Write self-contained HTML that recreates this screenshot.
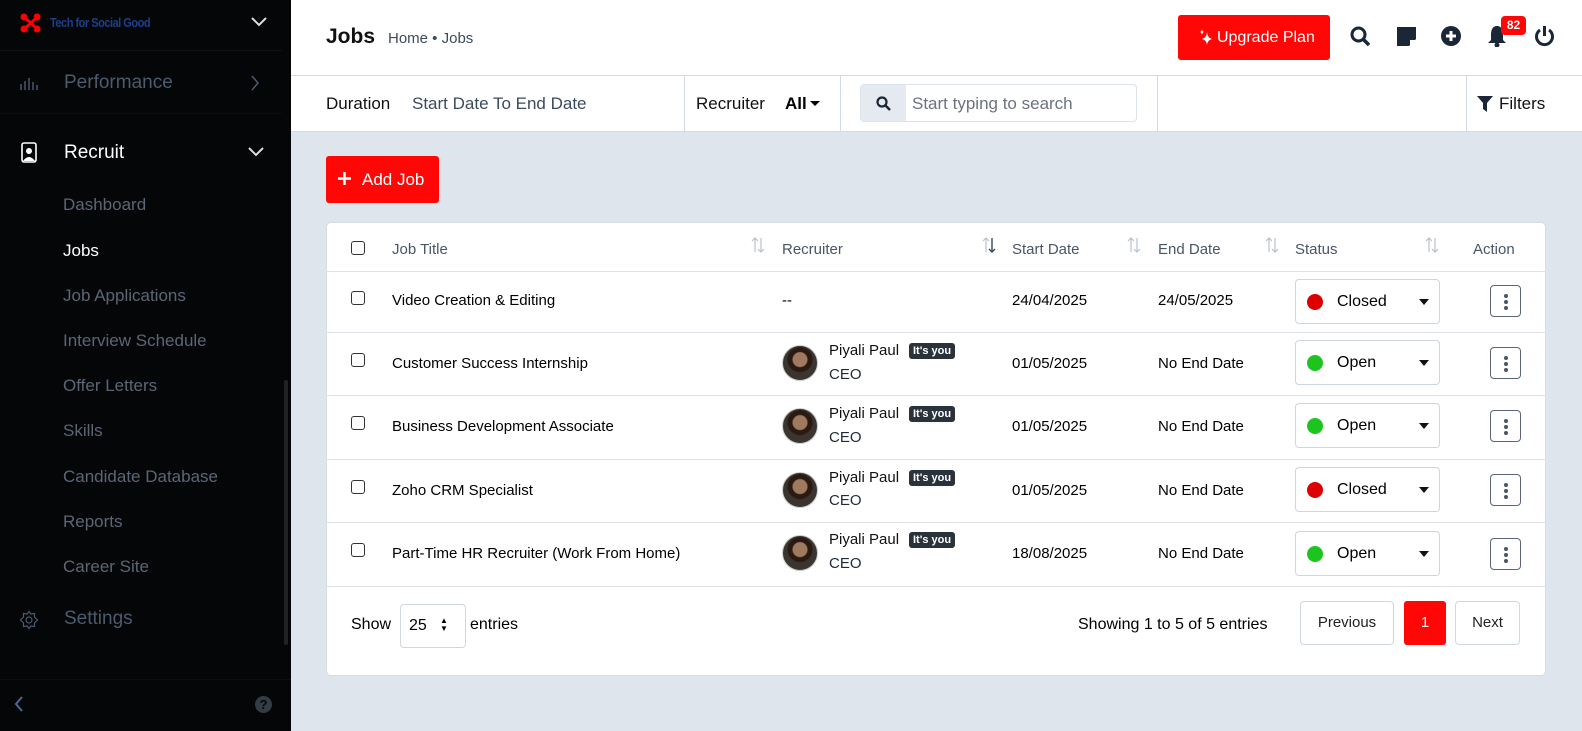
<!DOCTYPE html>
<html><head><style>
*{box-sizing:border-box;margin:0;padding:0}
body{width:1582px;height:731px;overflow:hidden;font-family:"Liberation Sans",Arial,sans-serif;background:#dee5ed;position:relative;color:#000}
.a{position:absolute}
#sb{left:0;top:0;width:291px;height:731px;background:#050608}
.sub{position:absolute;left:63px;font-size:17px;color:#5b6675}
.hd{font-size:15px;color:#4a5568;position:absolute;top:241px}
.sort{position:absolute;top:237px}
.cb{position:absolute;width:14px;height:14px;border:1.5px solid #333;border-radius:3px;left:351px}
.row{position:absolute;left:326px;width:1220px;border-top:1px solid #dde2e8}
.t{position:absolute;font-size:15px}
.st{position:absolute;left:1295px;width:145px;height:45px;border:1px solid #cdd6e0;border-radius:4px;background:#fff}
.st i{position:absolute;left:11px;top:14px;width:16px;height:16px;border-radius:50%}
.st span{position:absolute;left:41px;top:13px;font-size:16px}
.st b{position:absolute;right:10px;top:19px;border-left:5px solid transparent;border-right:5px solid transparent;border-top:6px solid #111}
.act{position:absolute;left:1490px;width:31px;height:32px;border:1px solid #5a6677;border-radius:4px;background:#fff}
.act i{position:absolute;left:13px;width:4px;height:4px;border-radius:50%;background:#4a5568}
.av{position:absolute;left:782px;width:36px;height:36px;border-radius:50%;background:radial-gradient(circle at 50% 40%,#a07a60 0 7px,#2a1a12 8px 12px,#3a3530 13px);border:1px solid #ccc}
.nm{position:absolute;left:829px;font-size:15px;color:#111}
.yu{position:absolute;left:909px;background:#2a323c;color:#fff;font-size:11px;font-weight:bold;padding:2px 4px;border-radius:3px}
.ceo{position:absolute;left:829px;font-size:15px;color:#1e2a3a}
</style></head><body>
<div id="sb" class="a">
 <svg class="a" style="left:20px;top:13px" width="22" height="20" viewBox="0 0 22 20"><circle cx="4" cy="4" r="3.5" fill="#f00"/><circle cx="17" cy="4" r="3.5" fill="#f00"/><circle cx="4" cy="16" r="3.5" fill="#f00"/><circle cx="17" cy="16" r="3.5" fill="#f00"/><path d="M4 4L11 10L17 4M4 16L11 10L17 16" stroke="#f00" stroke-width="3"/></svg>
 <div class="a" style="left:50px;top:15px;font-size:13px;font-weight:bold;color:#1c3f8a;letter-spacing:-.6px;transform:scaleX(.85);transform-origin:left">Tech for Social Good</div>
 <svg class="a" style="left:251px;top:17px" width="16" height="10"><path d="M1 1L8 8L15 1" stroke="#ddd" stroke-width="2" fill="none"/></svg>
 <div class="a" style="left:0;top:50px;width:282px;height:1px;background:#111"></div>
 <svg class="a" style="left:20px;top:76px" width="18" height="14"><path d="M1 14V8M5 14V5M9 14V2M13 14V6M17 14V9" stroke="#4a5668" stroke-width="1.5"/></svg>
 <div class="a" style="left:64px;top:72px;font-size:19px;color:#4c5b6d">Performance</div>
 <svg class="a" style="left:250px;top:75px" width="10" height="16"><path d="M2 1L8 8L2 15" stroke="#4c5b6d" stroke-width="1.5" fill="none"/></svg>
 <div class="a" style="left:0;top:113px;width:282px;height:1px;background:#0d0d0f"></div>
 <svg class="a" style="left:21px;top:142px" width="16" height="21"><rect x="1" y="1" width="14" height="19" rx="2" fill="none" stroke="#fff" stroke-width="1.6"/><circle cx="8" cy="9" r="3" fill="#fff"/><path d="M2 19Q8 11 14 19Z" fill="#fff"/></svg>
 <div class="a" style="left:64px;top:142px;font-size:19px;color:#fff">Recruit</div>
 <svg class="a" style="left:248px;top:147px" width="16" height="10"><path d="M1 1L8 8L15 1" stroke="#ddd" stroke-width="2" fill="none"/></svg>
 <div class="sub" style="top:195px">Dashboard</div>
 <div class="sub" style="top:241px;color:#fff">Jobs</div>
 <div class="sub" style="top:286px">Job Applications</div>
 <div class="sub" style="top:331px">Interview Schedule</div>
 <div class="sub" style="top:376px">Offer Letters</div>
 <div class="sub" style="top:421px">Skills</div>
 <div class="sub" style="top:467px">Candidate Database</div>
 <div class="sub" style="top:512px">Reports</div>
 <div class="sub" style="top:557px">Career Site</div>
 <div class="a" style="left:284px;top:380px;width:4px;height:265px;background:#222;border-radius:2px"></div>
 <svg class="a" style="left:19px;top:610px" width="20" height="20" viewBox="0 0 20 20"><circle cx="10" cy="10" r="3" fill="none" stroke="#4c5b6d" stroke-width="1.2"/><path d="M10 1.5L12 4L15.5 3.5L15.5 7L18.5 10L15.5 13L15.5 16.5L12 16L10 18.5L8 16L4.5 16.5L4.5 13L1.5 10L4.5 7L4.5 3.5L8 4Z" fill="none" stroke="#4c5b6d" stroke-width="1.2"/></svg>
 <div class="a" style="left:64px;top:608px;font-size:19px;color:#4c5b6d">Settings</div>
 <div class="a" style="left:0;top:679px;width:291px;height:1px;background:#0d0d0f"></div>
 <svg class="a" style="left:14px;top:696px" width="10" height="16"><path d="M8 1L2 8L8 15" stroke="#4c6a90" stroke-width="2" fill="none"/></svg>
 <div class="a" style="left:255px;top:696px;width:17px;height:17px;border-radius:50%;background:#333b46;color:#050608;font-size:13px;font-weight:bold;text-align:center;line-height:17px">?</div>
</div>
<!-- header -->
<div class="a" style="left:291px;top:0;width:1291px;height:76px;background:#fff;border-bottom:1px solid #cfdbe6"></div>
<div class="a" style="left:326px;top:25px;font-size:21px;font-weight:bold;color:#111">Jobs</div>
<div class="a" style="left:388px;top:30px;font-size:15px;color:#3d4a5c">Home • Jobs</div>
<div class="a" style="left:1178px;top:15px;width:152px;height:45px;background:#ff0707;border-radius:3px;color:#fff;font-size:16px;line-height:45px;padding-left:39px">Upgrade Plan</div>
<svg class="a" style="left:1199px;top:29px" width="14" height="16"><path d="M8 3Q8.5 9 13 10Q8.5 11 8 16Q7.5 11 3 10Q7.5 9 8 3Z" fill="#fff"/><path d="M3 0Q3.3 2.5 5 3Q3.3 3.5 3 6Q2.7 3.5 1 3Q2.7 2.5 3 0Z" fill="#fff"/></svg>
<svg class="a" style="left:1350px;top:26px" width="21" height="21"><circle cx="8.5" cy="8.5" r="6.5" fill="none" stroke="#1b2737" stroke-width="3"/><path d="M13 13L19 19" stroke="#1b2737" stroke-width="3.5"/></svg>
<svg class="a" style="left:1397px;top:27px" width="19" height="19"><path d="M0 0H19V12L12 19H0Z" fill="#1b2737"/><path d="M13 13H19L13 19Z" fill="#fff"/></svg>
<svg class="a" style="left:1441px;top:26px" width="20" height="20"><circle cx="10" cy="10" r="10" fill="#1b2737"/><path d="M10 5V15M5 10H15" stroke="#fff" stroke-width="3"/></svg>
<svg class="a" style="left:1487px;top:25px" width="20" height="22"><path d="M10 1C5 1 4 6 4 10V15L1 18H19L16 15V10C16 6 15 1 10 1Z" fill="#1b2737"/><circle cx="10" cy="20" r="2.5" fill="#1b2737"/></svg>
<div class="a" style="left:1501px;top:16px;width:25px;height:19px;background:#ff0707;color:#fff;border-radius:4px;font-size:12px;font-weight:bold;text-align:center;line-height:19px">82</div>
<svg class="a" style="left:1534px;top:25px" width="21" height="22"><path d="M6 5A8 8 0 1 0 15 5" fill="none" stroke="#1b2737" stroke-width="3"/><path d="M10.5 1V11" stroke="#1b2737" stroke-width="3"/></svg>
<!-- filter bar -->
<div class="a" style="left:291px;top:76px;width:1291px;height:56px;background:#fff;border-bottom:1px solid #cfdbe6"></div>
<div class="a" style="left:326px;top:94px;font-size:17px;color:#111">Duration</div>
<div class="a" style="left:412px;top:94px;font-size:17px;color:#3d4a5c">Start Date To End Date</div>
<div class="a" style="left:684px;top:76px;width:1px;height:56px;background:#cfdbe6"></div>
<div class="a" style="left:696px;top:94px;font-size:17px;color:#111">Recruiter</div>
<div class="a" style="left:785px;top:94px;font-size:17px;font-weight:bold;color:#000">All</div>
<div class="a" style="left:810px;top:101px;border-left:5px solid transparent;border-right:5px solid transparent;border-top:5px solid #000"></div>
<div class="a" style="left:840px;top:76px;width:1px;height:56px;background:#cfdbe6"></div>
<div class="a" style="left:860px;top:84px;width:277px;height:38px;border:1px solid #dde3ea;border-radius:4px"></div>
<div class="a" style="left:861px;top:85px;width:45px;height:36px;background:#e5eaf0"></div>
<svg class="a" style="left:876px;top:96px" width="15" height="15"><circle cx="6" cy="6" r="4.5" fill="none" stroke="#1b2737" stroke-width="2.2"/><path d="M9 9L14 14" stroke="#1b2737" stroke-width="2.5"/></svg>
<div class="a" style="left:912px;top:94px;font-size:17px;color:#6b7380">Start typing to search</div>
<div class="a" style="left:1157px;top:76px;width:1px;height:56px;background:#cfdbe6"></div>
<div class="a" style="left:1466px;top:76px;width:1px;height:56px;background:#cfdbe6"></div>
<svg class="a" style="left:1477px;top:96px" width="16" height="16"><path d="M0 0H16L10 7V16L6 13V7Z" fill="#1b2737"/></svg>
<div class="a" style="left:1499px;top:94px;font-size:17px;color:#111">Filters</div>
<!-- add job -->
<div class="a" style="left:326px;top:156px;width:113px;height:47px;background:#ff0707;border-radius:3px;color:#fff;font-size:17px;line-height:47px;padding-left:36px">Add Job</div>
<svg class="a" style="left:337px;top:171px" width="15" height="15"><path d="M7.5 1V14M1 7.5H14" stroke="#fff" stroke-width="2.5"/></svg>
<!-- table -->
<div class="a" style="left:326px;top:222px;width:1220px;height:454px;background:#fff;border-radius:5px;border:1px solid #d5dde6"></div>
<div class="cb" style="top:241px"></div>
<div class="hd" style="left:392px">Job Title</div>
<div class="hd" style="left:782px">Recruiter</div>
<div class="hd" style="left:1012px">Start Date</div>
<div class="hd" style="left:1158px">End Date</div>
<div class="hd" style="left:1295px">Status</div>
<div class="hd" style="left:1473px">Action</div>
<svg class="sort" style="left:751px" width="14" height="16"><path d="M4 15V1M1 4L4 1L7 4M10 1V15M7 12L10 15L13 12" stroke="#b8c2cc" stroke-width="1.2" fill="none"/></svg>
<svg class="sort" style="left:982px" width="14" height="16"><path d="M4 15V1M1 4L4 1L7 4" stroke="#b8c2cc" stroke-width="1.2" fill="none"/><path d="M10 1V15M7 12L10 15L13 12" stroke="#3d4a5c" stroke-width="1.4" fill="none"/></svg>
<svg class="sort" style="left:1127px" width="14" height="16"><path d="M4 15V1M1 4L4 1L7 4M10 1V15M7 12L10 15L13 12" stroke="#b8c2cc" stroke-width="1.2" fill="none"/></svg>
<svg class="sort" style="left:1265px" width="14" height="16"><path d="M4 15V1M1 4L4 1L7 4M10 1V15M7 12L10 15L13 12" stroke="#b8c2cc" stroke-width="1.2" fill="none"/></svg>
<svg class="sort" style="left:1425px" width="14" height="16"><path d="M4 15V1M1 4L4 1L7 4M10 1V15M7 12L10 15L13 12" stroke="#b8c2cc" stroke-width="1.2" fill="none"/></svg>

<div class="row" style="top:271px"></div>
<div class="cb" style="top:291px"></div>
<div class="t" style="left:392px;top:292px">Video Creation &amp; Editing</div>
<div class="t" style="left:782px;top:292px">--</div>
<div class="t" style="left:1012px;top:292px">24/04/2025</div>
<div class="t" style="left:1158px;top:292px">24/05/2025</div>
<div class="st" style="top:279px"><i style="background:#d00"></i><span>Closed</span><b></b></div>
<div class="act" style="top:285px"><i style="top:8px"></i><i style="top:14px"></i><i style="top:20px"></i></div>

<div class="row" style="top:332px"></div>
<div class="cb" style="top:353px"></div>
<div class="t" style="left:392px;top:355px">Customer Success Internship</div>
<div class="av" style="top:345px"></div><div class="nm" style="top:342px">Piyali Paul</div><div class="yu" style="top:343px">It's you</div><div class="ceo" style="top:366px">CEO</div>
<div class="t" style="left:1012px;top:355px">01/05/2025</div>
<div class="t" style="left:1158px;top:355px">No End Date</div>
<div class="st" style="top:340px"><i style="background:#1ec41e"></i><span>Open</span><b></b></div>
<div class="act" style="top:347px"><i style="top:8px"></i><i style="top:14px"></i><i style="top:20px"></i></div>

<div class="row" style="top:395px"></div>
<div class="cb" style="top:416px"></div>
<div class="t" style="left:392px;top:418px">Business Development Associate</div>
<div class="av" style="top:408px"></div><div class="nm" style="top:405px">Piyali Paul</div><div class="yu" style="top:406px">It's you</div><div class="ceo" style="top:429px">CEO</div>
<div class="t" style="left:1012px;top:418px">01/05/2025</div>
<div class="t" style="left:1158px;top:418px">No End Date</div>
<div class="st" style="top:403px"><i style="background:#1ec41e"></i><span>Open</span><b></b></div>
<div class="act" style="top:410px"><i style="top:8px"></i><i style="top:14px"></i><i style="top:20px"></i></div>

<div class="row" style="top:459px"></div>
<div class="cb" style="top:480px"></div>
<div class="t" style="left:392px;top:482px">Zoho CRM Specialist</div>
<div class="av" style="top:472px"></div><div class="nm" style="top:469px">Piyali Paul</div><div class="yu" style="top:470px">It's you</div><div class="ceo" style="top:492px">CEO</div>
<div class="t" style="left:1012px;top:482px">01/05/2025</div>
<div class="t" style="left:1158px;top:482px">No End Date</div>
<div class="st" style="top:467px"><i style="background:#d00"></i><span>Closed</span><b></b></div>
<div class="act" style="top:474px"><i style="top:8px"></i><i style="top:14px"></i><i style="top:20px"></i></div>

<div class="row" style="top:522px"></div>
<div class="cb" style="top:543px"></div>
<div class="t" style="left:392px;top:545px">Part-Time HR Recruiter (Work From Home)</div>
<div class="av" style="top:535px"></div><div class="nm" style="top:531px">Piyali Paul</div><div class="yu" style="top:532px">It's you</div><div class="ceo" style="top:555px">CEO</div>
<div class="t" style="left:1012px;top:545px">18/08/2025</div>
<div class="t" style="left:1158px;top:545px">No End Date</div>
<div class="st" style="top:531px"><i style="background:#1ec41e"></i><span>Open</span><b></b></div>
<div class="act" style="top:538px"><i style="top:8px"></i><i style="top:14px"></i><i style="top:20px"></i></div>

<div class="row" style="top:586px"></div>
<div class="t" style="left:351px;top:616px;font-size:16px">Show</div>
<div class="a" style="left:400px;top:604px;width:66px;height:44px;border:1px solid #cfd7e0;border-radius:4px;background:#fff"></div>
<div class="t" style="left:409px;top:617px;font-size:16px">25</div>
<div class="a" style="left:440px;top:617px;font-size:8px;line-height:8px">▲<br>▼</div>
<div class="t" style="left:470px;top:616px;font-size:16px">entries</div>
<div class="t" style="left:1078px;top:616px;font-size:16px">Showing 1 to 5 of 5 entries</div>
<div class="a" style="left:1300px;top:601px;width:94px;height:44px;border:1px solid #cfd7e0;border-radius:4px;text-align:center;line-height:42px;font-size:15px;color:#222">Previous</div>
<div class="a" style="left:1404px;top:601px;width:42px;height:44px;background:#ff0707;border-radius:3px;text-align:center;line-height:44px;font-size:15px;color:#fff">1</div>
<div class="a" style="left:1455px;top:601px;width:65px;height:44px;border:1px solid #cfd7e0;border-radius:4px;text-align:center;line-height:42px;font-size:15px;color:#222">Next</div>
</body></html>
